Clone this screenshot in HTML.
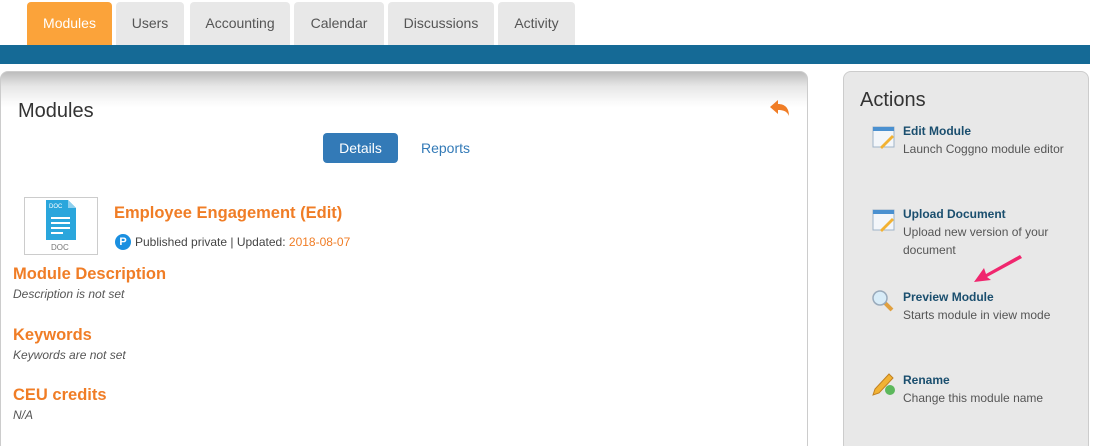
<!DOCTYPE html>
<html style="overflow:hidden;height:446px"><head><style>
body{margin:0;width:1107px;height:446px;overflow:hidden;background:#fff;font-family:"Liberation Sans",sans-serif;position:relative}
.tab{position:absolute;top:2px;height:43px;background:#e8e8e8;border-radius:4px 4px 0 0;color:#555;font-size:14px;line-height:42px;text-align:center}
.bar{position:absolute;left:0;top:45px;width:1090px;height:19px;background:#156a96}
.main{position:absolute;left:0;top:71px;width:806px;height:380px;border:1px solid #ccc;border-radius:8px;background:linear-gradient(#bdbdbd 0,#e6e6e6 14px,#fafafa 30px,#fff 36px)}
.side{position:absolute;left:843px;top:71px;width:244px;height:380px;border:1px solid #ccc;border-radius:8px;background:#e8e8e8}
.abs{position:absolute}
.or{color:#f07d26;font-weight:bold;font-size:16.5px}
.it{font-style:italic;color:#555;font-size:12px}
.at{color:#1a4e6e;font-weight:bold;font-size:12px}
.ad{color:#555;font-size:12px;line-height:18px}
</style></head><body>
<div class="tab" style="left:27px;width:85px;background:#fba33a;color:#fff">Modules</div>
<div class="tab" style="left:116px;width:68px">Users</div>
<div class="tab" style="left:190px;width:100px">Accounting</div>
<div class="tab" style="left:294px;width:90px">Calendar</div>
<div class="tab" style="left:388px;width:106px">Discussions</div>
<div class="tab" style="left:498px;width:77px">Activity</div>
<div class="bar"></div>
<div class="main"></div>
<div class="side"></div>
<div class="abs" style="left:18px;top:100px;font-size:20px;color:#333">Modules</div>
<svg class="abs" style="left:769px;top:99px" width="22" height="20" viewBox="0 0 22 20"><path d="M1 8 L9 1 L9 5 C16 5 20 9 20 17 C18 12 14 11 9 11 L9 15 Z" fill="#f07d26"/></svg>
<div class="abs" style="left:323px;top:133px;width:75px;height:30px;background:#337ab7;border-radius:4px;color:#fff;font-size:14px;line-height:30px;text-align:center">Details</div>
<div class="abs" style="left:421px;top:140px;color:#337ab7;font-size:14px">Reports</div>
<div class="abs" style="left:24px;top:197px;width:72px;height:56px;border:1px solid #ccc;background:#fff"></div>
<svg class="abs" style="left:44px;top:200px" width="34" height="52" viewBox="0 0 34 52"><path d="M2 0 H24 L32 8 V40 H2 Z" fill="#2aa6dc"/><path d="M24 0 V8 H32" fill="#8fd0ee"/><text x="5" y="8" font-size="6" fill="#fff" font-family="Liberation Sans">DOC</text><rect x="7" y="17" width="19" height="2" fill="#fff"/><rect x="7" y="22" width="19" height="2" fill="#fff"/><rect x="7" y="27" width="19" height="2" fill="#fff"/><rect x="7" y="32" width="12" height="2" fill="#fff"/><text x="7" y="50" font-size="8" fill="#777" font-family="Liberation Sans">DOC</text></svg>
<div class="abs or" style="left:114px;top:204px">Employee Engagement (Edit)</div>
<div class="abs" style="left:115px;top:234px;width:16px;height:16px;border-radius:50%;background:#1a8fe0;color:#fff;font-size:11px;font-weight:bold;text-align:center;line-height:16px">P</div>
<div class="abs" style="left:135px;top:235px;font-size:12px;color:#444">Published private | Updated: <span style="color:#f07d26">2018-08-07</span></div>
<div class="abs or" style="left:13px;top:265px">Module Description</div>
<div class="abs it" style="left:13px;top:287px">Description is not set</div>
<div class="abs or" style="left:13px;top:326px">Keywords</div>
<div class="abs it" style="left:13px;top:348px">Keywords are not set</div>
<div class="abs or" style="left:13px;top:386px">CEU credits</div>
<div class="abs it" style="left:13px;top:408px">N/A</div>
<div class="abs" style="left:860px;top:89px;font-size:20px;color:#333">Actions</div>
<svg class="abs" style="left:872px;top:126px" width="24" height="24"><rect x="1" y="1" width="21" height="20" fill="#f3f6fa" stroke="#9fb4c8"/><rect x="1" y="1" width="21" height="4" fill="#4a90d0"/><path d="M8 21 L20 9 L22 11 L10 23 Z" fill="#f2b233"/></svg>
<div class="abs at" style="left:903px;top:124px">Edit Module</div>
<div class="abs ad" style="left:903px;top:140px">Launch Coggno module editor</div>
<svg class="abs" style="left:872px;top:209px" width="24" height="24"><rect x="1" y="1" width="21" height="20" fill="#f3f6fa" stroke="#9fb4c8"/><rect x="1" y="1" width="21" height="4" fill="#4a90d0"/><path d="M8 21 L20 9 L22 11 L10 23 Z" fill="#f2b233"/></svg>
<div class="abs at" style="left:903px;top:207px">Upload Document</div>
<div class="abs ad" style="left:903px;top:223px">Upload new version of your<br>document</div>
<svg class="abs" style="left:972px;top:252px" width="52" height="34"><path d="M48 3 L14 22 L12 16 L2 30 L19 28 L15 25 L50 6 Z" fill="#f0266e"/></svg>
<svg class="abs" style="left:871px;top:289px" width="24" height="24"><line x1="13" y1="13" x2="21" y2="21" stroke="#e0a040" stroke-width="4"/><circle cx="9" cy="9" r="7" fill="#d8ecf8" stroke="#9ab" stroke-width="1.5"/></svg>
<div class="abs at" style="left:903px;top:290px">Preview Module</div>
<div class="abs ad" style="left:903px;top:306px">Starts module in view mode</div>
<svg class="abs" style="left:871px;top:371px" width="26" height="26"><path d="M2 24 L4 18 L18 3 L22 7 L8 22 Z" fill="#f2b233" stroke="#c08020"/><circle cx="19" cy="19" r="5" fill="#5cb85c"/></svg>
<div class="abs at" style="left:903px;top:373px">Rename</div>
<div class="abs ad" style="left:903px;top:389px">Change this module name</div>
</body></html>
